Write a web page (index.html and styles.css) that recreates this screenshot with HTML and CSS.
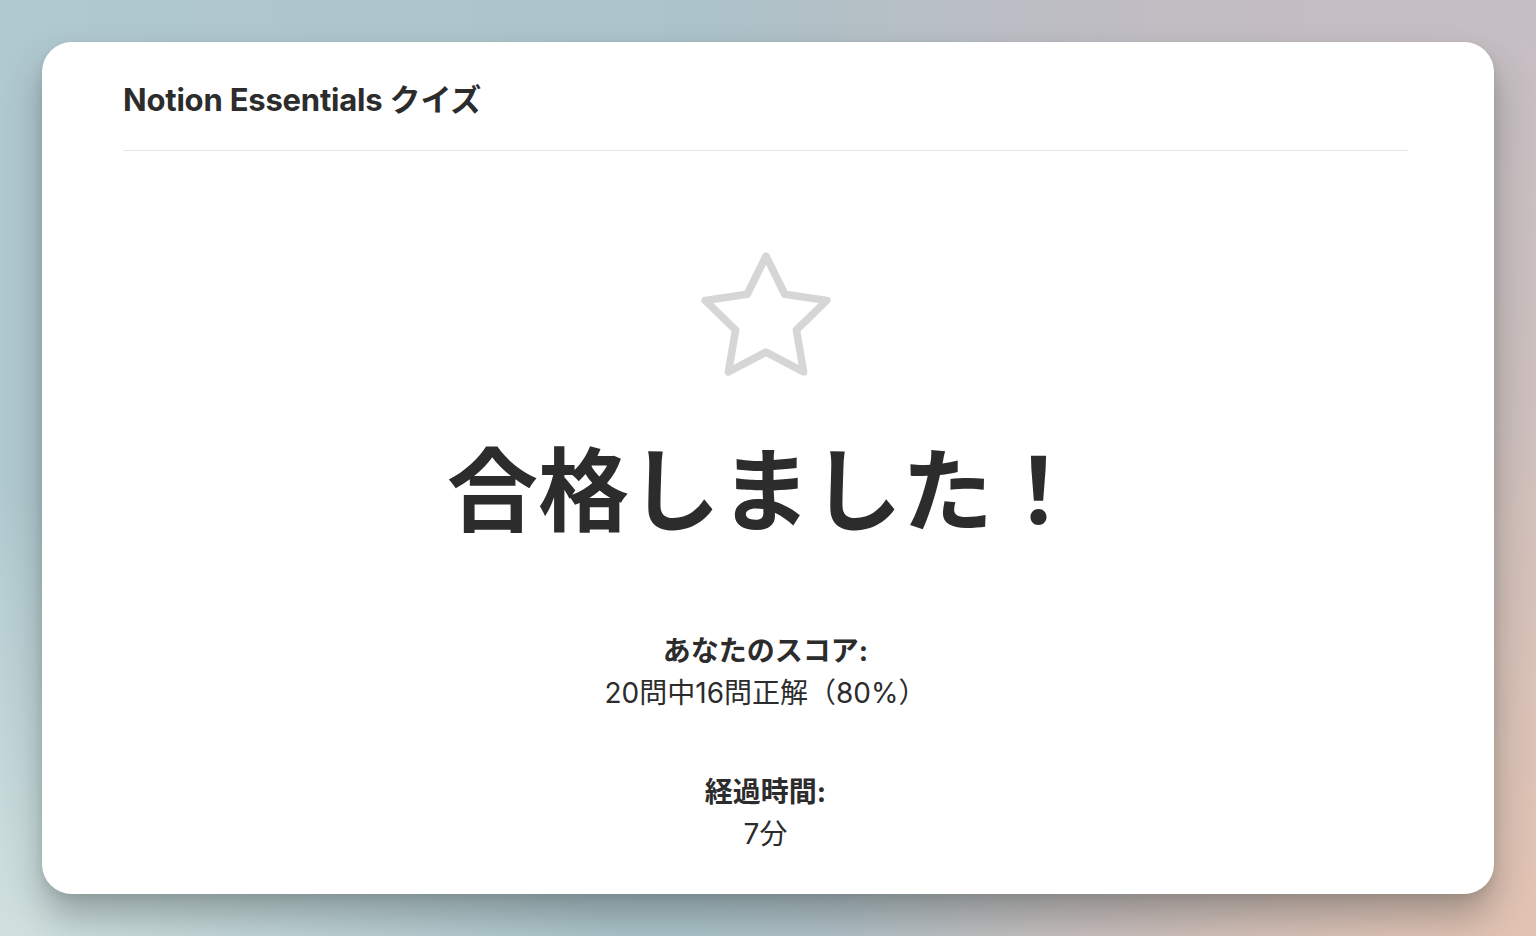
FILE: index.html
```html
<!DOCTYPE html>
<html lang="ja">
<head>
<meta charset="utf-8">
<title>Notion Essentials クイズ</title>
<link rel="stylesheet" href="styles.css">
</head>
<body>
<div class="card">
  <header class="card-header">
    <h1 class="title">Notion Essentials クイズ</h1>
  </header>
  <main class="result">
    <svg class="star" width="146" height="146" viewBox="0 0 24 24" fill="none" stroke="#d6d6d6" stroke-width="1.25" stroke-linejoin="round" stroke-linecap="round">
      <polygon points="12,2 15.09,8.26 22,9.27 17,14.14 18.18,21.02 12,17.77 5.82,21.02 7,14.14 2,9.27 8.91,8.26"/>
    </svg>
    <h2 class="headline">合格しました！</h2>
    <dl class="stats">
      <div class="stat">
        <dt class="stat-label">あなたのスコア:</dt>
        <dd class="stat-value">20問中16問正解（80%）</dd>
      </div>
      <div class="stat">
        <dt class="stat-label">経過時間:</dt>
        <dd class="stat-value">7分</dd>
      </div>
    </dl>
  </main>
</div>
</body>
</html>
```

FILE: styles.css
```css
html, body {
  margin: 0;
  padding: 0;
}
body {
  width: 1536px;
  height: 936px;
  overflow: hidden;
  box-sizing: border-box;
  padding: 42px;
  font-family: Inter, "Noto Sans CJK JP", sans-serif;
  color: #2c2c2c;
  background:
    radial-gradient(ellipse 700px 500px at 100% 100%, rgba(228, 196, 178, 0.95), rgba(228, 196, 178, 0) 100%),
    radial-gradient(ellipse 600px 450px at 0% 100%, rgba(210, 226, 224, 0.95), rgba(210, 226, 224, 0) 100%),
    radial-gradient(ellipse 800px 500px at 100% 0%, rgba(196, 190, 196, 0.9), rgba(196, 190, 196, 0) 100%),
    linear-gradient(90deg, #b0c9cf 0%, #abc3c9 45%, #bcbcc2 75%, #d0c0bc 100%);
}
.card {
  width: 1452px;
  height: 852px;
  box-sizing: border-box;
  background: #ffffff;
  border-radius: 30px;
  padding: 0 86px 0 81px;
  display: flex;
  flex-direction: column;
  box-shadow: 0 22px 36px rgba(40, 50, 50, 0.34), 0 4px 10px rgba(0, 0, 0, 0.08);
}
.card-header {
  padding: 40px 0 32px;
  border-bottom: 1px solid #e6e6e6;
}
.title {
  margin: 0;
  font-size: 31px;
  line-height: 36px;
  font-weight: 700;
  letter-spacing: -0.2px;
  color: #2c2c2c;
}
.result {
  display: flex;
  flex-direction: column;
  align-items: center;
  padding-top: 93px;
}
.star {
  display: block;
}
.headline {
  margin: 40px 0 0;
  font-family: "Noto Sans CJK JP", sans-serif;
  font-size: 91px;
  line-height: 108px;
  font-weight: 700;
  color: #2c2c2c;
}
.stats {
  margin: 92px 0 0;
  display: flex;
  flex-direction: column;
  align-items: center;
  gap: 57px;
}
.stat {
  display: flex;
  flex-direction: column;
  align-items: center;
}
.stat-label {
  font-size: 28px;
  line-height: 42px;
  font-weight: 700;
}
.stat-value {
  margin: 0;
  font-size: 28px;
  line-height: 42px;
  font-weight: 400;
}
```
